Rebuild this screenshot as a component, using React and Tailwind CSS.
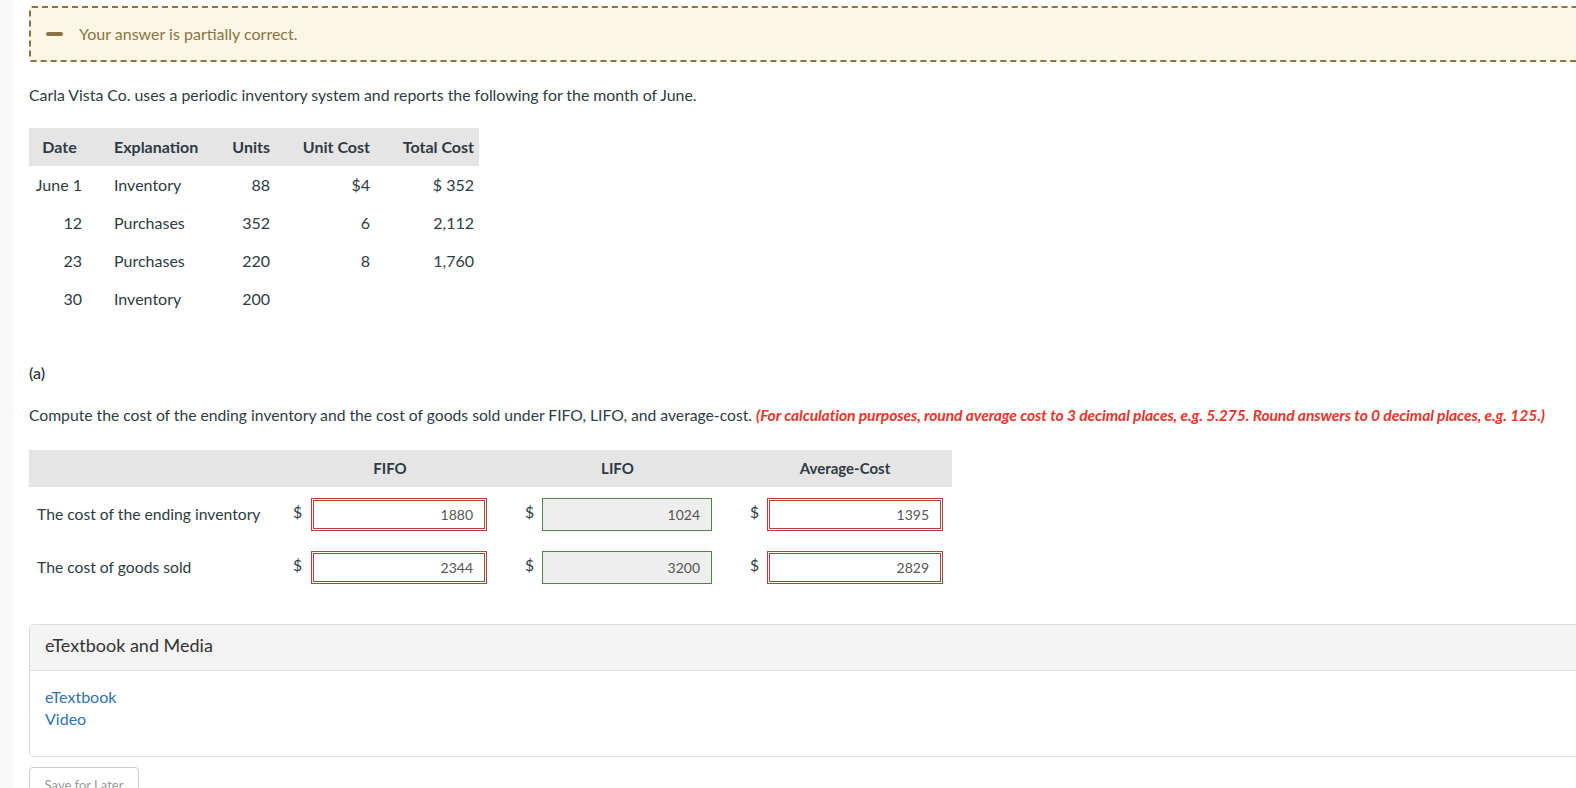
import React from "react";

const font = { fontFamily: "Lato, 'Noto Sans', sans-serif" };

function RedInput({ value }) {
  return (
    <div className="w-[176px] h-[33px] border border-[#b5413d] p-[1px] bg-white">
      <div className="h-full w-full border border-[#b5413d] flex items-center justify-end pr-[11px] text-[14px] text-[#555]">
        {value}
      </div>
    </div>
  );
}

function GreenInput({ value }) {
  return (
    <div className="w-[170px] h-[33px] border border-[#4a8a3c] bg-[#eeeeee] flex items-center justify-end pr-[11px] text-[14px] text-[#555]">
      {value}
    </div>
  );
}

function AnswerRow({ label, fifo, lifo, avg }) {
  return (
    <div className="flex items-start h-[53px] pt-[11px]">
      <div className="w-[254px] pl-2 leading-[33px]">{label}</div>
      <div className="w-[28px] pl-[10px] leading-[29px]">$</div>
      <RedInput value={fifo} />
      <div className="w-[55px] pl-[38px] leading-[29px]">$</div>
      <GreenInput value={lifo} />
      <div className="w-[55px] pl-[38px] leading-[29px]">$</div>
      <RedInput value={avg} />
    </div>
  );
}

export default function App() {
  const rows = [
    ["June 1", "Inventory", "88", "$4", "$ 352"],
    ["12", "Purchases", "352", "6", "2,112"],
    ["23", "Purchases", "220", "8", "1,760"],
    ["30", "Inventory", "200", "", ""],
  ];
  return (
    <div className="w-[1576px] h-[788px] overflow-hidden bg-white flex" style={font}>
      <div className="w-[14px] shrink-0 bg-[#f8f8f8]" />
      <div className="pl-[15px] pt-[6px] w-[1600px] shrink-0 text-[#2d3b45] text-[16px]">
        {/* banner */}
        <div className="h-[56px] border-2 border-dashed border-[#8b7344] bg-[#fbf7e4] rounded-[3px] flex items-center">
          <div className="ml-[15px] w-[17px] h-[4px] rounded-full bg-[#8b7344]" />
          <div className="ml-[16px] text-[#8b7344] text-[16px]">Your answer is partially correct.</div>
        </div>

        <p className="mt-[22px] leading-[22px] text-[15.85px]">
          Carla Vista Co. uses a periodic inventory system and reports the following for the month of June.
        </p>

        {/* inventory table */}
        <div className="mt-[22px] w-[450px]">
          <div className="flex h-[38px] items-center bg-[#e5e5e5] font-bold">
            <div className="w-[61px] text-center">Date</div>
            <div className="w-[125px] pl-[24px]">Explanation</div>
            <div className="w-[62px] text-right pr-[7px]">Units</div>
            <div className="w-[99px] text-right pr-[6px]">Unit Cost</div>
            <div className="w-[103px] text-right pr-[5px]">Total Cost</div>
          </div>
          {rows.map((r, i) => (
            <div key={i} className="flex h-[38px] items-center">
              <div className="w-[61px] text-right pr-2">{r[0]}</div>
              <div className="w-[125px] pl-[24px]">{r[1]}</div>
              <div className="w-[62px] text-right pr-[7px]">{r[2]}</div>
              <div className="w-[99px] text-right pr-[6px]">{r[3]}</div>
              <div className="w-[103px] text-right pr-[5px]">{r[4]}</div>
            </div>
          ))}
        </div>

        <div className="mt-[44px] leading-[22px] font-semibold">(a)</div>

        <p className="mt-[20px] leading-[22px] text-[15.7px] whitespace-nowrap">
          Compute the cost of the ending inventory and the cost of goods sold under FIFO, LIFO, and average-cost.{" "}
          <span className="text-[#e5362b] font-bold italic tracking-[-0.13px]">
            (For calculation purposes, round average cost to 3 decimal places, e.g. 5.275. Round answers to 0 decimal places, e.g. 125.)
          </span>
        </p>

        {/* answer table */}
        <div className="mt-[24px] w-[923px] text-[15.7px]">
          <div className="flex h-[37px] items-center bg-[#e5e5e5] font-bold text-[15px]">
            <div className="w-[254px]" />
            <div className="w-[214px] text-center">FIFO</div>
            <div className="w-[241px] text-center">LIFO</div>
            <div className="w-[214px] text-center">Average-Cost</div>
          </div>
          <AnswerRow label="The cost of the ending inventory" fifo="1880" lifo="1024" avg="1395" />
          <AnswerRow label="The cost of goods sold" fifo="2344" lifo="3200" avg="2829" />
        </div>

        {/* eTextbook */}
        <div className="mt-[31px] border border-[#dddddd] rounded-[4px]">
          <div className="h-[46px] bg-[#f4f4f4] border-b border-[#dddddd] flex items-center pl-[15px] pb-[5px] text-[18px] text-[#333]">
            eTextbook and Media
          </div>
          <div className="pl-[15px] pt-[15px] pb-[26px] text-[#3273ad] text-[16px] leading-[22px]">
            <div>eTextbook</div>
            <div>Video</div>
          </div>
        </div>

        <div className="mt-[10px] w-[110px] h-[40px] border border-[#cccccc] rounded-[4px] flex justify-center pt-[8px] text-[13px] text-[#999]">
          Save for Later
        </div>
      </div>
    </div>
  );
}
